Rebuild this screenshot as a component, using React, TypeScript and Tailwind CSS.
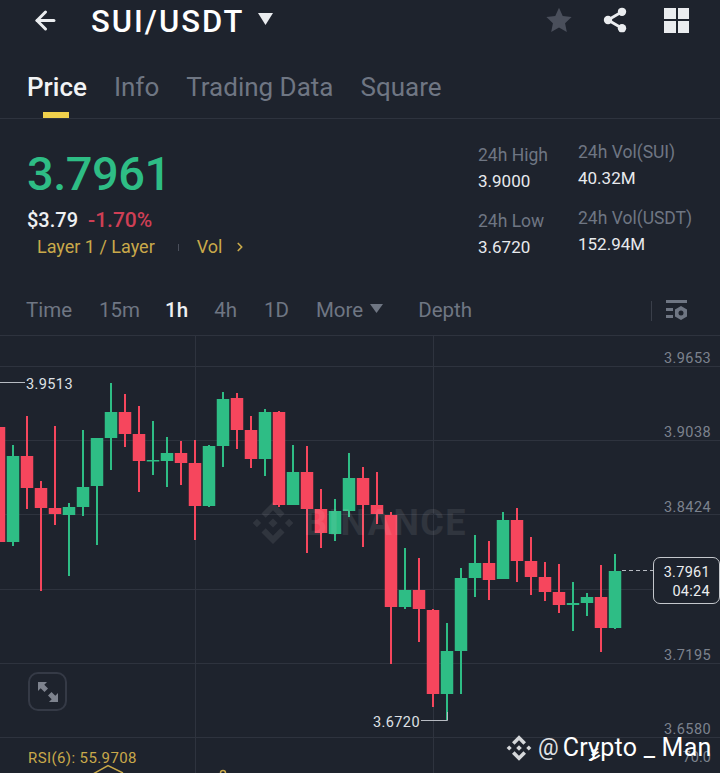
import { ArrowLeft, ChevronRight } from "lucide-react";

const font = { fontFamily: '"Roboto", "Noto Sans", sans-serif' };

// [x, body-top, body-bottom, wick-top, wick-bottom, up]
const candles: [number, number, number, number, number, boolean][] = [
  [-1, 427, 542, 415, 550, false],
  [13, 456, 542, 445, 546, true],
  [27, 456, 488, 416, 509, false],
  [41, 488, 508, 481, 591, false],
  [55, 508, 514, 426, 525, false],
  [69, 507, 515, 503, 576, true],
  [83, 487, 507, 430, 516, true],
  [97, 438, 486, 438, 545, true],
  [111, 412, 438, 383, 470, true],
  [125, 412, 434, 394, 447, false],
  [139, 434, 461, 406, 492, false],
  [153, 460, 461, 421, 475, true],
  [167, 453, 461, 437, 487, true],
  [181, 453, 463, 441, 485, false],
  [195, 463, 506, 440, 540, false],
  [209, 446, 506, 445, 507, true],
  [223, 399, 446, 392, 467, true],
  [237, 398, 430, 393, 449, false],
  [251, 430, 459, 416, 468, false],
  [265, 412, 459, 409, 476, true],
  [279, 412, 505, 411, 507, false],
  [293, 472, 505, 445, 505, true],
  [307, 472, 509, 446, 553, false],
  [321, 509, 533, 489, 548, false],
  [335, 511, 534, 499, 541, true],
  [349, 478, 511, 453, 517, true],
  [363, 478, 505, 467, 547, false],
  [377, 505, 514, 472, 524, false],
  [391, 515, 607, 512, 664, false],
  [405, 590, 607, 548, 609, true],
  [419, 590, 609, 558, 642, false],
  [433, 610, 694, 609, 707, false],
  [447, 651, 694, 623, 720, true],
  [461, 578, 651, 568, 694, true],
  [475, 563, 578, 535, 597, true],
  [489, 563, 580, 541, 600, false],
  [503, 520, 579, 512, 579, true],
  [517, 520, 561, 508, 582, false],
  [531, 561, 577, 537, 595, false],
  [545, 577, 592, 562, 601, false],
  [559, 592, 605, 564, 613, false],
  [573, 603, 605, 582, 631, true],
  [587, 597, 603, 593, 616, true],
  [601, 597, 628, 565, 652, false],
  [615, 571, 628, 554, 629, true],
];

const gridY = [366, 440, 514, 589, 663, 737];
const axis = [
  ["3.9653", 350],
  ["3.9038", 424],
  ["3.8424", 499],
  ["3.7195", 647],
  ["3.6580", 721],
];

function BinanceMark({ size, color }: { size: number; color: string }) {
  return (
    <svg width={size} height={size} viewBox="0 0 24 24" fill={color}>
      <path d="M12 1 18 7 15.8 9.2 12 5.4 8.2 9.2 6 7Z" />
      <path d="M12 23 6 17 8.2 14.8 12 18.6 15.8 14.8 18 17Z" />
      <path d="M3.6 9.8 5.8 12 3.6 14.2 1.4 12Z" />
      <path d="M20.4 9.8 22.6 12 20.4 14.2 18.2 12Z" />
      <path d="M12 9.6 14.4 12 12 14.4 9.6 12Z" />
    </svg>
  );
}

function Stat({ label, value }: { label: string; value: string }) {
  return (
    <div>
      <div className="text-[17.5px] leading-[22px] text-[#6f7683]">{label}</div>
      <div className="mt-[4px] text-[17px] leading-[22px] text-[#e8eaed]">{value}</div>
    </div>
  );
}

function Chart() {
  return (
    <div className="relative h-[437px] w-full overflow-hidden">
      <svg width="720" height="437" viewBox="0 336 720 437" className="block">
        {gridY.map((y) => (
          <line key={y} x1="0" x2="720" y1={y + 0.5} y2={y + 0.5} stroke="#2e333e" />
        ))}
        {[195, 433].map((x) => (
          <line key={x} x1={x + 0.5} x2={x + 0.5} y1="336" y2="773" stroke="#2e333e" />
        ))}
        {candles.map(([x, top, bottom, wickTop, wickBottom, up]) => {
          const color = up ? "#2ebd85" : "#f6465d";
          return (
            <g key={x} fill={color}>
              <rect x={x - 1} y={wickTop} width="2" height={wickBottom - wickTop} />
              <rect x={x - 6.25} y={top} width="12.5" height={Math.max(bottom - top, 1.5)} />
            </g>
          );
        })}
        <line x1="0" x2="25" y1="382.5" y2="382.5" stroke="#b7bbc2" />
        <path d="M421 720.5H447.5V712" fill="none" stroke="#b7bbc2" />
        <line x1="622" x2="654" y1="570.5" y2="570.5" stroke="#b7bbc2" strokeDasharray="4 3" />
        <path d="M93 774 108 765.5 123 773" fill="none" stroke="#c9a94a" strokeWidth="1.5" />
        <circle cx="223" cy="773" r="2.5" fill="none" stroke="#c9a94a" strokeWidth="1.5" />
      </svg>

      {/* watermark */}
      <div className="absolute left-[250px] top-[164px] flex items-center gap-[8px] opacity-[0.08]">
        <BinanceMark size={46} color="#ffffff" />
        <span className="text-[36px] font-bold leading-none tracking-[1.5px] text-white">BINANCE</span>
      </div>

      {axis.map(([v, top]) => (
        <div
          key={v}
          className="absolute right-[9px] text-[14.5px] leading-[18px] tracking-[0.4px] text-[#7c828d]"
          style={{ top: Number(top) - 336 }}
        >
          {v}
        </div>
      ))}
      <div className="absolute right-[9px] top-[413px] text-[14.5px] leading-[18px] text-[#7c828d]">70.0</div>

      <div className="absolute left-[26px] top-[40px] text-[14.5px] leading-[18px] tracking-[0.4px] text-[#dfe1e5]">3.9513</div>
      <div className="absolute left-[373px] top-[378px] text-[14.5px] leading-[18px] tracking-[0.4px] text-[#dfe1e5]">3.6720</div>

      <div className="absolute left-[653px] top-[221px] flex h-[47px] w-[67px] flex-col items-end justify-center rounded-[7px] border border-[#c4c7cc] bg-[#1e232d] pr-[9px] pt-[2px] text-[14.5px] leading-[19px] tracking-[0.3px] text-[#eceef0]">
        <span>3.7961</span>
        <span>04:24</span>
      </div>

      <div className="absolute left-[28px] top-[336px] flex h-[39px] w-[39px] items-center justify-center rounded-[10px] border-2 border-[#353a46]">
        <svg width="24" height="24" viewBox="0 0 24 24" fill="#7e838e">
          <path d="M2 2H11L8.3 4.7 12 8.5 8.5 12 4.7 8.3 2 11Z" />
          <path d="M22 22H13L15.7 19.3 12 15.5 15.5 12 19.3 15.7 22 13Z" />
        </svg>
      </div>

      <div className="absolute left-[28px] top-[413px] text-[15px] leading-[18px] tracking-[0.4px] text-[#c9a94a]">RSI(6): 55.9708</div>

      {/* repost credit */}
      <div className="absolute left-[505px] top-[397px] flex items-center">
        <BinanceMark size={28} color="#d5d7da" />
        <span className="ml-[5px] text-[23px] leading-[30px] text-[#e0e2e5]">@</span>
        <span className="relative ml-[4px] text-[25px] leading-[30px] tracking-[0.25px] text-white">
          Crypto _ Man
          <span className="absolute left-[26px] top-[12px] text-[13px] font-bold leading-[16px] text-white" style={{ fontFamily: '"Noto Sans CJK SC", sans-serif' }}>彡</span>
        </span>
      </div>
    </div>
  );
}

export default function App() {
  const tabs = ["Info", "Trading Data", "Square"];
  return (
    <div className="h-[773px] w-[720px] overflow-hidden bg-[#1e232d]" style={font}>
      <div className="flex h-[40px] items-center pl-[31px] pr-[31px]">
        <ArrowLeft size={29} strokeWidth={2.5} className="text-[#eaecef]" />
        <span className="ml-[31px] mt-[2px] text-[31px] font-medium leading-none tracking-[2px] text-white">SUI/USDT</span>
        <svg width="17" height="14" viewBox="0 0 17 14" className="ml-[13px] -mt-[2px]" fill="#eaecef">
          <path d="M1 1H16L8.5 13Z" />
        </svg>
        <div className="ml-auto flex items-center">
          <svg width="28" height="28" viewBox="0 0 24 24" fill="#4a4f5b">
            <path d="M12 1.5 15.2 8.6 22.8 9.5 17.2 14.7 18.7 22.3 12 18.5 5.3 22.3 6.8 14.7 1.2 9.5 8.8 8.6Z" />
          </svg>
          <svg width="28" height="28" viewBox="0 0 24 24" fill="#eaecef" className="ml-[28px]">
            <circle cx="18" cy="5" r="3.6" />
            <circle cx="6" cy="12" r="3.6" />
            <circle cx="18" cy="19" r="3.6" />
            <path d="M6 12 18 5M6 12 18 19" stroke="#eaecef" strokeWidth="2.4" />
          </svg>
          <div className="ml-[35px] grid h-[25px] w-[25px] grid-cols-2 gap-[2px]">
            <div className="bg-[#eaecef]" />
            <div className="bg-[#eaecef]" />
            <div className="bg-[#eaecef]" />
            <div className="bg-[#eaecef]" />
          </div>
        </div>
      </div>

      <div className="mt-[26px] flex h-[53px] items-start gap-[27px] border-b border-[#2e333e] pl-[27px]">
        <div className="relative h-[52px]">
          <span className="text-[26px] font-medium leading-[42px] text-[#f2f3f5]">Price</span>
          <div className="absolute bottom-0 left-[16px] h-[6px] w-[26px] bg-[#f0d04c]" />
        </div>
        {tabs.map((t) => (
          <span key={t} className="text-[26px] leading-[42px] text-[#6f7683]">{t}</span>
        ))}
      </div>

      <div className="flex h-[167px]">
        <div className="w-[478px] pl-[27px]">
          <div className="mt-[27px] text-[47px] font-medium leading-[56px] -tracking-[0.5px] text-[#2ebd85]">3.7961</div>
          <div className="mt-[5px] flex items-baseline gap-[10px] leading-[26px]">
            <span className="text-[20px] font-medium text-[#eef0f2]">$3.79</span>
            <span className="text-[21px] font-medium text-[#cf3f55]">-1.70%</span>
          </div>
          <div className="mt-[2px] flex items-center pl-[10px] text-[18px] leading-[24px] text-[#c9a94a]">
            <span>Layer 1 / Layer</span>
            <span className="ml-[23px] h-[7px] w-px bg-[#4a4f5b]" />
            <span className="ml-[18px]">Vol</span>
            <ChevronRight size={14} strokeWidth={3} className="ml-[11px]" />
          </div>
        </div>
        <div className="mt-[25px] w-[100px]">
          <Stat label="24h High" value="3.9000" />
          <div className="mt-[18px]">
            <Stat label="24h Low" value="3.6720" />
          </div>
        </div>
        <div className="mt-[22px]">
          <Stat label="24h Vol(SUI)" value="40.32M" />
          <div className="mt-[18px]">
            <Stat label="24h Vol(USDT)" value="152.94M" />
          </div>
        </div>
      </div>

      <div className="flex h-[50px] items-center border-b border-[#2e333e] pl-[26px] pr-[32px] text-[20.5px] text-[#6f7683]">
        <span>Time</span>
        <span className="ml-[27px]">15m</span>
        <span className="ml-[25px] font-medium text-[#eef0f2]">1h</span>
        <span className="ml-[26px]">4h</span>
        <span className="ml-[27px]">1D</span>
        <span className="ml-[27px]">More</span>
        <svg width="13" height="9" viewBox="0 0 13 9" className="ml-[7px] -mt-[4px]" fill="#6f7683">
          <path d="M0 0H13L6.5 9Z" />
        </svg>
        <span className="ml-[35px]">Depth</span>
        <div className="ml-auto flex items-center gap-[13px]">
          <div className="h-[20px] w-px bg-[#3a3f4a]" />
          <svg width="23" height="23" viewBox="0 0 23 23" fill="#6f7683">
            <rect x="1" y="1" width="21" height="3" />
            <rect x="1" y="9" width="7" height="3" />
            <rect x="1" y="16" width="7" height="3" />
            <path fillRule="evenodd" d="M16 7 22 10.5V17.5L16 21 10 17.5V10.5ZM16 11.5A2.5 2.5 0 1 0 16 16.5 2.5 2.5 0 1 0 16 11.5Z" />
          </svg>
        </div>
      </div>

      <Chart />
    </div>
  );
}
